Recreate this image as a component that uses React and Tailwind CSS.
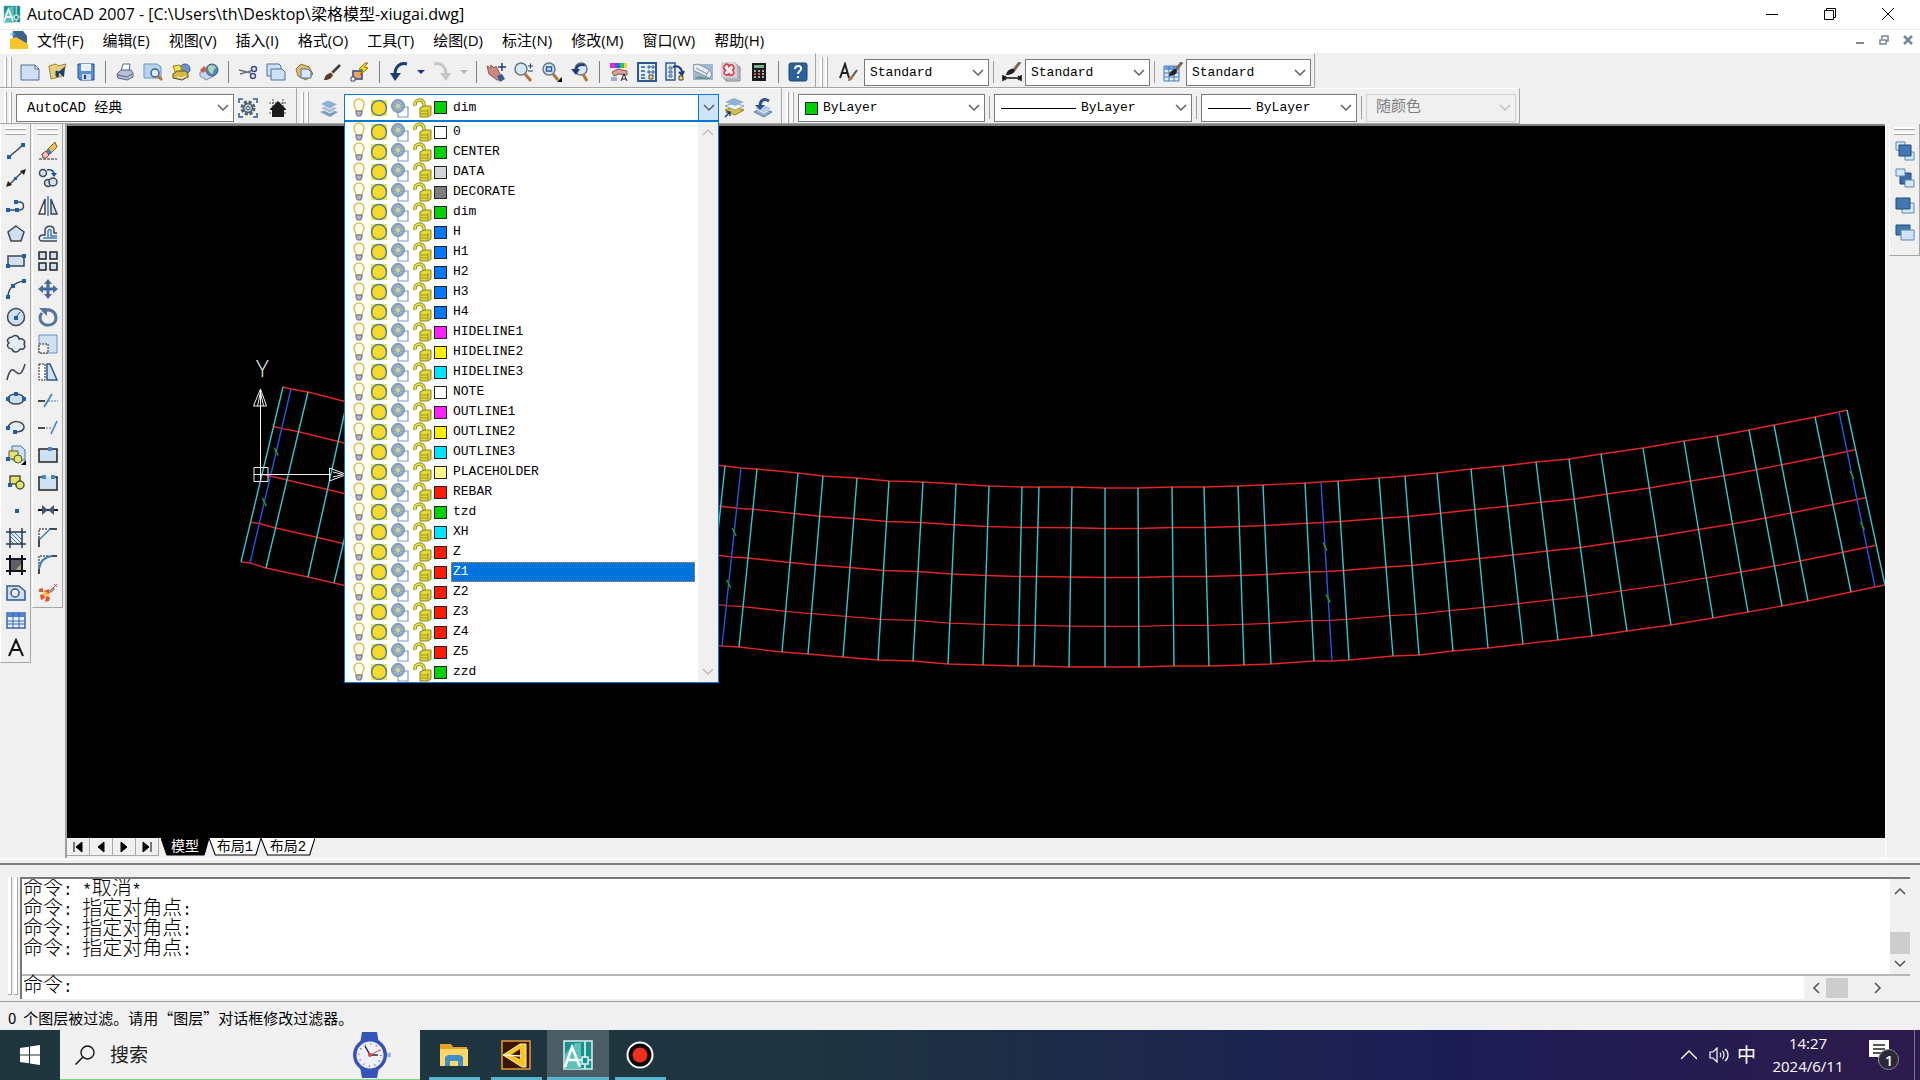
import { useState } from 'react';

const MENUS = ['文件(F)', '编辑(E)', '视图(V)', '插入(I)', '格式(O)', '工具(T)', '绘图(D)', '标注(N)', '修改(M)', '窗口(W)', '帮助(H)'];

const GREEN = '#00d200';
const BLUE = '#0078ff';
const RED = '#ff1a00';
const CYAN = '#00e5ff';

const LAYERS = [
  { name: '0', color: '#ffffff' },
  { name: 'CENTER', color: GREEN },
  { name: 'DATA', color: '#d2d5d8' },
  { name: 'DECORATE', color: '#7d7d82' },
  { name: 'dim', color: GREEN },
  { name: 'H', color: BLUE },
  { name: 'H1', color: BLUE },
  { name: 'H2', color: BLUE },
  { name: 'H3', color: BLUE },
  { name: 'H4', color: BLUE },
  { name: 'HIDELINE1', color: '#ff20ff' },
  { name: 'HIDELINE2', color: '#fff000' },
  { name: 'HIDELINE3', color: CYAN },
  { name: 'NOTE', color: '#ffffff' },
  { name: 'OUTLINE1', color: '#ff20ff' },
  { name: 'OUTLINE2', color: '#fff000' },
  { name: 'OUTLINE3', color: CYAN },
  { name: 'PLACEHOLDER', color: '#fff88a' },
  { name: 'REBAR', color: RED },
  { name: 'tzd', color: GREEN },
  { name: 'XH', color: CYAN },
  { name: 'Z', color: RED },
  { name: 'Z1', color: RED },
  { name: 'Z2', color: RED },
  { name: 'Z3', color: RED },
  { name: 'Z4', color: RED },
  { name: 'Z5', color: RED },
  { name: 'zzd', color: GREEN },
];

// cross beams of the deck: x/y at the upper edge, x/y at the lower edge
const BEAMS = [
  [283, 387, 241, 562],
  [291, 389, 250, 563, 'pier'],
  [308, 392, 266, 568],
  [347, 402, 308, 577],
  [375, 409, 334, 583],
  [440, 424, 405, 600],
  [540, 441, 512, 619],
  [640, 456, 618, 634],
  [725, 466, 706, 644],
  [741, 468, 722, 646, 'pier'],
  [757, 469, 739, 647],
  [798, 473, 782, 652],
  [823, 476, 808, 654],
  [857, 478, 843, 657],
  [889, 481, 878, 660],
  [923, 482, 913, 661],
  [956, 484, 948, 664],
  [989, 486, 983, 665],
  [1022, 487, 1018, 666],
  [1039, 487, 1034, 666],
  [1072, 487, 1069, 667],
  [1105, 488, 1105, 667],
  [1138, 488, 1139, 667],
  [1172, 487, 1174, 666],
  [1204, 487, 1209, 666],
  [1238, 486, 1244, 665],
  [1263, 485, 1271, 664],
  [1305, 483, 1314, 661],
  [1321, 482, 1332, 661, 'pier'],
  [1338, 481, 1349, 660],
  [1379, 478, 1393, 656],
  [1405, 476, 1419, 655],
  [1437, 473, 1453, 651],
  [1471, 469, 1488, 648],
  [1503, 466, 1523, 644],
  [1536, 462, 1558, 640],
  [1569, 459, 1592, 636],
  [1601, 454, 1627, 631],
  [1643, 448, 1671, 625],
  [1684, 441, 1713, 618],
  [1717, 436, 1748, 612],
  [1749, 430, 1782, 606],
  [1774, 425, 1808, 601],
  [1815, 417, 1851, 592],
  [1839, 412, 1875, 587, 'pier'],
  [1847, 410, 1885, 585],
];
const GIRDERS = [0, 0.226, 0.5, 0.773, 1];

const at = ([x1, y1, x2, y2], t) => [x1 + (x2 - x1) * t, y1 + (y2 - y1) * t];

const N = '#1f3f6e';
const S = '#3d4652';
const F = '#cfe0f2';

const ICONS = {
  new: <path d="M1 3h14l4 4v11H1zM15 3v4h4" fill={F} stroke="#4a6f9c" />,
  open: (
    <>
      <path d="M1 4l7-2 2 2 8-2-4 12-11 3z" fill="#e8cf7a" stroke="#9a8238" />
      <path d="M17 5l-6 5 5 5M11 10l-3-1v5l2 1z" fill={N} stroke={N} />
    </>
  ),
  save: (
    <>
      <path d="M2 2h16v16H4l-2-2z" fill="#5e8fd0" stroke="#2a4f87" />
      <path d="M5 2h10v7H5z" fill="#e6f0fb" />
      <path d="M6 12h9v6H6z" fill="#c3d6ee" />
      <path d="M8 13h2v4H8z" fill={N} />
    </>
  ),
  plot: (
    <>
      <path d="M6 9l2-7h7l-1 7z" fill="#fff" stroke="#5b6688" />
      <path d="M2 12l4-4h10l2 3v4l-6 3-9-2z" fill="#b9bfd4" stroke="#555e85" />
      <path d="M3 13l9 2 5-3" fill="none" stroke="#555e85" />
    </>
  ),
  preview: (
    <>
      <path d="M1 2h13l4 3v11H1z" fill="#b5d3f0" stroke="#6f94ba" />
      <circle cx="12" cy="11" r="4" fill="#dcecfb" stroke="#3d5f8c" strokeWidth="1.5" />
      <path d="M15 14l4 4" stroke="#b5723a" strokeWidth="2.5" />
    </>
  ),
  publish: (
    <>
      <circle cx="14" cy="7" r="5" fill="#6d95c8" stroke="#3a5e92" />
      <path d="M2 4l7-1 2 5-6 4z" fill="#ffe04a" stroke="#9a7a10" />
      <path d="M2 12l4-3h9l2 3v3l-6 3-9-2z" fill="#d9b84a" stroke="#5c5223" />
      <path d="M6 15l5 1 4-2" stroke="#fff" fill="none" />
    </>
  ),
  web: (
    <>
      <path d="M1 10l9-2 5 6-8 4-6-4z" fill="#c8d4e8" stroke="#7c8dab" />
      <circle cx="13" cy="8" r="6" fill="#4f86c0" stroke="#355f8c" />
      <path d="M9 5c3-3 7-2 8 1-2 1-3 3-3 6-3 0-5-3-5-7z" fill="#a9d8b0" />
      <path d="M1 8l4-4 3 3-4 4z" fill="#d75a44" />
    </>
  ),
  cut: (
    <>
      <path d="M1 8l12 3M2 12l11-3" stroke="#6c7480" strokeWidth="1.5" />
      <circle cx="16" cy="7" r="2.5" fill="none" stroke="#3d4a86" strokeWidth="1.5" />
      <circle cx="15" cy="14" r="2.5" fill="none" stroke="#3d4a86" strokeWidth="1.5" />
    </>
  ),
  copy: (
    <>
      <path d="M1 2h12l2 2v10H1z" fill={F} stroke="#4a6f9c" />
      <path d="M5 7h11l3 3v8H5z" fill={F} stroke="#4a6f9c" />
    </>
  ),
  paste: (
    <>
      <path d="M7 2l8 3 4 7-7 6-8-4-2-7z" fill="#dcbf72" stroke="#8c7034" />
      <path d="M7 7h7l3 3v6H7z" fill="#d9e9f9" stroke="#4a6f9c" />
    </>
  ),
  brush: (
    <>
      <path d="M18 3l-8 8" stroke="#3c3c3c" strokeWidth="2.5" />
      <path d="M2 18c1-5 4-7 7-7l2 2c-1 3-4 5-9 5z" fill="#5b3d2c" />
      <path d="M9 10l2 2" stroke="#d5a56a" strokeWidth="2" />
    </>
  ),
  bedit: (
    <>
      <path d="M3 9h9v8H3z" fill="#f2a36b" stroke="#2c4b7c" strokeWidth="1.5" />
      <path d="M15 1l-6 6 4 1-3 5 8-7-4-1 4-4z" fill="#ffd91f" stroke="#937000" />
      <path d="M1 15h4v4H1z" fill="#fff" stroke="#2c4b7c" />
    </>
  ),
  undo: (
    <>
      <path d="M18 2C11 0 6 5 6 12" fill="none" stroke="#1d3c73" strokeWidth="3" />
      <path d="M1 11h11l-6 8z" fill="#1d3c73" />
    </>
  ),
  redo: (
    <>
      <path d="M2 2c7-2 12 3 12 10" fill="none" stroke="#c3c6ca" strokeWidth="3" />
      <path d="M8 11h11l-5 8z" fill="#c3c6ca" />
    </>
  ),
  pan: (
    <>
      <path d="M1 4l3 2 1-3 3 3 2-2 4 8v6h-3L3 12z" fill="#c98a84" stroke="#8e5550" />
      <path d="M11 14l5-2 3 5-5 3z" fill="#38598c" />
      <path d="M16 1v8M12 5h8" stroke={N} strokeWidth="1.5" />
    </>
  ),
  zoomrt: (
    <>
      <circle cx="7" cy="7" r="6" fill="#d6e6f5" stroke="#64788e" strokeWidth="1.5" />
      <path d="M11 12l6 7" stroke="#b5723a" strokeWidth="3" />
      <path d="M14 4h5M16.5 1.5v5M14 9h5" stroke={N} />
    </>
  ),
  zoomwin: (
    <>
      <circle cx="7" cy="7" r="6" fill="#d6e6f5" stroke="#64788e" strokeWidth="1.5" />
      <path d="M4.5 5h5v4h-5z" fill="none" stroke="#1f5fa8" strokeWidth="1.5" />
      <path d="M11 12l5 6" stroke="#b5723a" strokeWidth="3" />
      <path d="M20 15v5h-5z" fill="#000" />
    </>
  ),
  zoomprev: (
    <>
      <circle cx="11" cy="7" r="6" fill="#d6e6f5" stroke="#64788e" strokeWidth="1.5" />
      <path d="M13 12l4 7" stroke="#b5723a" strokeWidth="3" />
      <path d="M15 3C9 2 6 4 6 9" stroke="#1d3c73" strokeWidth="2.5" fill="none" />
      <path d="M1 7h9l-4 6z" fill="#1d3c73" />
    </>
  ),
  props: (
    <>
      <path d="M1 1h5v5H1z" fill="#e02bd0" />
      <path d="M6 1h5v5H6z" fill="#3b5bea" />
      <path d="M11 1h4v5h-4z" fill="#22c55a" />
      <path d="M15 1h3v5h-3z" fill="#f4d02b" />
      <path d="M3 10l6-3 9 2v4l-8-1-5 2z" fill="#d79f98" stroke="#8e5550" />
      <path d="M2 16h6M2 18h6" stroke="#4a6fb0" />
      <path d="M12 19l3-7 3 7M13 17h4" stroke="#222" fill="none" />
    </>
  ),
  dc: (
    <>
      <path d="M1 1h18v18H1z" fill="#e5effa" stroke="#2f578e" strokeWidth="2" />
      <path d="M4 5h4M4 9h4M4 13h4M4 16h4" stroke="#2f578e" strokeWidth="1.5" />
      <path d="M11 4h2v2h-2zM15 4h2v2h-2zM11 9h2v2h-2zM15 9h2v2h-2z" fill="#e5effa" stroke="#2f578e" />
      <path d="M12 13h4v4h-4z" fill="#e9e06a" stroke="#444" />
    </>
  ),
  palettes: (
    <>
      <path d="M1 1h9v17H1z" fill="#e5effa" stroke="#2f578e" strokeWidth="1.5" />
      <path d="M4 5h3v2H4zM4 9h3v2H4zM4 13h3v2H4z" fill="#fff" stroke="#2f578e" />
      <path d="M8 5c5-2 9 1 9 6M14 10l3 3 2-4" fill="none" stroke="#1d3c73" strokeWidth="2" />
      <path d="M14 14h4v4h-4z" fill="#e9e06a" stroke="#444" />
    </>
  ),
  sheets: (
    <>
      <path d="M0 2h20v16H0z" fill="#9db9cf" />
      <path d="M0 3l5-1 12 6 2 5-3 3-10-5-5-2z" fill="#e6edf2" stroke="#8293a2" />
      <path d="M3 6l11 6M16 8l-3 6" stroke="#8293a2" />
      <path d="M1 17l5-3 13 3z" fill="#6f9188" />
    </>
  ),
  markup: (
    <>
      <path d="M5 5h14v14H5z" fill="#c9ccd2" stroke="#7b8088" />
      <path d="M3 3h14v14H3z" fill="#dfe2e7" stroke="#8d929a" />
      <path d="M1 1h14v14H1z" fill="#eef0f4" stroke="#b6bac2" />
      <path d="M4 3c2-2 4 0 4 1 2-2 5-1 5 2 0 2-2 2-2 2 3 1 2 5 0 5-2 1-3-1-3-1-2 2-5 1-5-1 0-2 2-3 2-3-3 0-3-4-1-5z" fill="none" stroke="#e2404a" strokeWidth="1.8" />
    </>
  ),
  calc: (
    <>
      <path d="M3 1h14v18H3z" fill="#1c1c1c" />
      <path d="M5 3h10v3H5z" fill="#7fb08c" />
      <path d="M5 9h10M5 12h10M5 15h10" stroke="#d9d9d9" strokeWidth="1.5" strokeDasharray="2 2" />
      <path d="M5 12h6" stroke="#e33" strokeWidth="1.5" strokeDasharray="2 2" />
    </>
  ),
  help: (
    <>
      <rect x="1" y="1" width="18" height="18" rx="2" fill="#2a6299" stroke="#1b4674" />
      <path d="M7 7c0-4 7-4 6 0 0 2-3 2-3 5M10 14v2" fill="none" stroke="#fff" strokeWidth="2" />
    </>
  ),
  textstyle: (
    <>
      <path d="M2 16L7 2l4 14M4 11h6" fill="none" stroke="#222" strokeWidth="2" />
      <path d="M19 8l-5 7" stroke="#555" strokeWidth="2" />
      <path d="M10 19c0-3 2-5 4-5l1 1c0 2-2 4-5 4z" fill="#a8743d" />
    </>
  ),
  dimstyle: (
    <>
      <path d="M1 13v6M19 13v6M1 16h18M4 14l-3 2 3 2M16 14l3 2-3 2" stroke="#111" strokeWidth="1.5" fill="none" />
      <path d="M18 0l-6 8" stroke="#7d6a55" strokeWidth="3" />
      <path d="M4 13c1-5 5-7 8-6l1 2c-1 2-4 4-9 4z" fill="#222" />
    </>
  ),
  tablestyle: (
    <>
      <path d="M1 4h15v15H1z" fill="#dceafa" stroke="#4876ba" />
      <path d="M1 4h15v4H1z" fill="#6f9fe0" />
      <path d="M6 4v15M11 4v15M1 11h15M1 15h15" stroke="#4876ba" />
      <path d="M19 0l-6 8" stroke="#7d6a55" strokeWidth="3" />
      <path d="M6 14c0-4 4-7 7-7l1 2c0 2-2 5-8 5z" fill="#222" />
    </>
  ),
  gear: (
    <>
      <path d="M1 5V1h4M15 1h4v4M19 15v4h-4M5 19H1v-4" fill="none" stroke="#5b7fae" strokeWidth="2" />
      <circle cx="10" cy="10" r="6" fill="none" stroke="#53606e" strokeWidth="3" strokeDasharray="3 1.7" />
      <circle cx="10" cy="10" r="4.5" fill="#a9bed6" stroke="#53606e" strokeWidth="1.5" />
      <circle cx="10" cy="10" r="1.5" fill="#fff" stroke="#53606e" />
    </>
  ),
  home: (
    <>
      <path d="M1 5h18M1 15h18M5 1v18M15 1v18" stroke="#555" strokeDasharray="2 1" />
      <path d="M2 11l8-8 8 8v1h-2v7H4v-7H2z" fill="#1b1b1b" />
    </>
  ),
  layers: (
    <>
      <path d="M1 14l8-3 10 3-8 5z" fill="#7d9cc4" />
      <path d="M1 10l8-3 10 3-8 5z" fill="#a5bddb" stroke="#f0f0f0" />
      <path d="M1 6l8-4 10 4-8 5z" fill="#8fb0d4" stroke="#f0f0f0" />
    </>
  ),
  layercur: (
    <>
      <path d="M1 12l9-3 10 3-9 5z" fill="#d8c23c" stroke="#8f7f1c" />
      <path d="M1 8l9-3 10 3-9 4z" fill="#f2f6fa" stroke="#8aa3be" />
      <path d="M1 4l9-4 10 4-9 4z" fill="#8fb0d4" />
      <path d="M1 19l4-4M2 14h4v4" stroke="#1d3c73" strokeWidth="1.5" fill="none" />
    </>
  ),
  layerprev: (
    <>
      <path d="M1 14l8-4 10 4-8 5z" fill="#8fadd2" stroke="#5f7ea8" />
      <path d="M1 10l8-4 10 4-8 5z" fill="#b5cae2" stroke="#f0f0f0" />
      <path d="M16 3c-5-3-9-1-9 5" stroke="#2e5182" strokeWidth="3" fill="none" />
      <path d="M2 7h10l-5 5z" fill="#2e5182" />
    </>
  ),
  line: (
    <>
      <path d="M3 16L17 4" stroke={S} strokeWidth="1.5" />
      <path d="M1 14h4v4H1zM15 2h4v4h-4z" fill="#1f5fa8" />
    </>
  ),
  xline: (
    <>
      <path d="M3 17L17 3" stroke={S} strokeWidth="1.5" />
      <path d="M0 19l2-6 4 4zM20 1l-6 2 4 4z" fill="#222" />
      <path d="M8 9h3v3H8z" fill="#1f5fa8" />
    </>
  ),
  pline: (
    <>
      <path d="M2 14h11M10 6h3c6 0 6 8 0 8" fill="none" stroke={S} strokeWidth="1.5" />
      <path d="M0 12h4v4H0zM9 12h4v4H9zM8 4h4v4H8z" fill="#1f5fa8" />
    </>
  ),
  polygon: <path d="M10 2l8 6-3 9H5L2 8z" fill={F} stroke={S} strokeWidth="1.5" />,
  rect: (
    <>
      <path d="M2 5h16v10H2z" fill={F} stroke={S} strokeWidth="1.5" />
      <path d="M0 13h4v4H0zM16 3h4v4h-4z" fill="#1f5fa8" />
    </>
  ),
  arc: (
    <>
      <path d="M2 18C2 9 9 3 18 2" fill="none" stroke={S} strokeWidth="1.5" />
      <path d="M0 16h4v4H0zM16 0h4v4h-4zM5 5h4v4H5z" fill="#1f5fa8" />
    </>
  ),
  circle: (
    <>
      <circle cx="10" cy="10" r="8.5" fill={F} stroke={S} strokeWidth="1.5" />
      <path d="M10 10l4-5" stroke={S} />
      <path d="M8 9h4v4H8z" fill="#1f5fa8" />
    </>
  ),
  cloud: <path d="M6 3c3-3 7-1 7 2 4-1 7 2 5 5 2 3 0 6-4 5-2 4-7 4-8 0-4 0-6-4-3-6C0 7 2 3 6 3z" fill="#e3ebf4" stroke={S} strokeWidth="1.5" />,
  spline: <path d="M1 18c3-13 6-11 9-8s6 3 9-8" fill="none" stroke={S} strokeWidth="1.5" />,
  ellipse: (
    <>
      <ellipse cx="10" cy="10" rx="8" ry="5" fill={F} stroke={S} strokeWidth="1.5" />
      <path d="M0 8h4v4H0zM16 8h4v4h-4zM8 3h4v4H8z" fill="#1f5fa8" />
    </>
  ),
  earc: (
    <>
      <path d="M2 11c1-9 17-8 16 0-1 4-6 4-9 4" fill="#e3ebf4" stroke={S} strokeWidth="1.5" />
      <path d="M0 9h4v4H0zM7 13h4v4H7z" fill="#1f5fa8" />
    </>
  ),
  insert: (
    <>
      <path d="M6 1h9l4 4v10H6z" fill={F} stroke="#4a6f9c" />
      <path d="M3 6h9v8H3z" fill="#e6e272" stroke="#4d5638" />
      <circle cx="12" cy="14" r="4" fill="#e6e272" stroke="#4d5638" />
      <path d="M0 12h4v4H0z" fill="#1f5fa8" />
      <path d="M20 15v5h-5z" fill="#000" />
    </>
  ),
  block: (
    <>
      <path d="M4 4h10v8H4z" fill="#e6e272" stroke="#4d5638" strokeWidth="1.5" />
      <circle cx="14" cy="13" r="4" fill="#e6e272" stroke="#4d5638" strokeWidth="1.5" />
      <path d="M2 11h4v4H2z" fill="#1f5fa8" />
    </>
  ),
  point: <path d="M9 9h4v4H9z" fill="#1f5fa8" />,
  hatch: (
    <>
      <path d="M4 4h12v12H4z" fill="#e6f0fb" />
      <path d="M4 8l8 8M4 4l12 12M8 4l8 8M4 12l4 4" stroke="#4a6f9c" />
      <path d="M4 0v20M16 0v20M0 4h20M0 16h20" stroke="#22385a" strokeWidth="1.5" />
    </>
  ),
  gradient: (
    <>
      <path d="M4 4h12v12H4z" fill="#5d6068" />
      <path d="M9 16l7-8v8z" fill="#b5a768" />
      <path d="M4 0v20M16 0v20M0 4h20M0 16h20" stroke="#10131c" strokeWidth="2" />
    </>
  ),
  region: (
    <>
      <path d="M1 3h12l6 5v9H1z" fill={F} stroke="#2f578e" strokeWidth="1.5" />
      <circle cx="9" cy="10" r="4" fill="#f0f0f0" stroke="#2f578e" strokeWidth="1.5" />
    </>
  ),
  table: (
    <>
      <path d="M1 3h18v15H1z" fill="#e8f1fc" stroke="#3a62b4" strokeWidth="1.5" />
      <path d="M1 3h18v4H1z" fill="#5480d4" />
      <path d="M7 3v15M13 3v15M1 11h18M1 14h18" stroke="#3a62b4" />
    </>
  ),
  mtext: <path d="M3 18L10 2l7 16M6 12h8" fill="none" stroke="#111" strokeWidth="2" />,
  erase: (
    <>
      <path d="M1 18h18" stroke="#222" strokeDasharray="3 1" />
      <path d="M9 9l8-8 2 5-7 7z" fill="#e4c25a" stroke="#7c5d22" />
      <path d="M8 10l3-2 3 4-3 2z" fill="#4f79b0" />
      <path d="M4 13l4-3 3 4-3 3H5z" fill="#e9c4bb" stroke="#8c3c30" />
    </>
  ),
  copyobj: (
    <>
      <circle cx="5" cy="5" r="3.5" fill={F} stroke={S} strokeWidth="1.5" />
      <circle cx="10" cy="15" r="3.5" fill={F} stroke={S} strokeWidth="1.5" />
      <circle cx="15" cy="14" r="4" fill={F} stroke={S} strokeWidth="1.5" />
      <path d="M9 2c4-1 7 1 7 4" stroke="#1f4f8e" strokeWidth="1.5" />
      <path d="M13 5h6l-3 4z" fill="#1f4f8e" />
    </>
  ),
  mirror: (
    <>
      <path d="M7 3v15H1z" fill="#fff" stroke={S} strokeWidth="1.5" />
      <path d="M13 3v15h6z" fill={F} stroke={S} strokeWidth="1.5" />
      <path d="M10 0v20" stroke="#3b7cc4" strokeWidth="1.5" />
    </>
  ),
  offset: (
    <>
      <path d="M19 17H3c-3-2-2-6 2-6h2V6c1-5 9-5 9 0v3h3" fill="none" stroke={S} strokeWidth="1.5" />
      <path d="M19 14H5M10 13V7c1-2 3-2 3 0v5h6" fill="none" stroke="#3b7cc4" strokeWidth="1.5" />
    </>
  ),
  array: <path d="M1 1h7v7H1zM12 1h7v7h-7zM1 12h7v7H1zM12 12h7v7h-7z" fill={F} stroke="#222" strokeWidth="1.5" />,
  move: (
    <>
      <path d="M10 3v14M3 10h14" stroke="#44699c" strokeWidth="3" />
      <path d="M10 0l4 5H6zM10 20l4-5H6zM0 10l5-4v8zM20 10l-5-4v8z" fill="#44699c" />
    </>
  ),
  rotate: (
    <>
      <path d="M5 5c6-5 13 0 13 6 0 9-15 10-16 0 0-2 1-4 2-5" fill="none" stroke="#54749e" strokeWidth="3" />
      <path d="M1 1h8v8z" fill="#54749e" />
    </>
  ),
  scale: (
    <>
      <path d="M1 1h18v18H1z" fill={F} stroke="#6a92c4" />
      <path d="M1 10h9v9H1z" fill="#f0f0f0" stroke="#222" strokeDasharray="2 1" />
    </>
  ),
  stretch: (
    <>
      <path d="M1 2h6v16H1z" fill="#fff" stroke="#222" strokeDasharray="2 1" />
      <path d="M9 2l3 0 7 16H9z" fill={F} stroke="#2f578e" strokeWidth="1.5" />
    </>
  ),
  trim: (
    <>
      <path d="M0 11h7" stroke="#111" strokeWidth="1.5" />
      <path d="M10 11h10" stroke="#3b7cc4" strokeDasharray="2 1" />
      <path d="M6 17l8-13" stroke="#3b7cc4" strokeWidth="1.5" />
    </>
  ),
  extend: (
    <>
      <path d="M0 11h7" stroke="#111" strokeWidth="1.5" />
      <path d="M8 11h6" stroke="#3b7cc4" strokeDasharray="2 1" />
      <path d="M13 17l6-13" stroke="#3b7cc4" strokeWidth="1.5" />
    </>
  ),
  breakpt: (
    <>
      <path d="M1 4h18v13H1z" fill={F} stroke="#222" strokeWidth="1.5" />
      <path d="M10 2h4v4h-4z" fill="#4a86c8" />
    </>
  ),
  break: (
    <>
      <path d="M5 4H1v13h18V4h-4" fill={F} stroke="#222" strokeWidth="1.5" />
      <path d="M4 2h4v4H4zM13 2h4v4h-4z" fill="#4a86c8" />
    </>
  ),
  join: (
    <>
      <path d="M0 10h20" stroke="#111" strokeWidth="2" />
      <path d="M4 5l6 5-6 5zM16 5l-6 5 6 5z" fill="#44597a" />
    </>
  ),
  chamfer: (
    <>
      <path d="M1 19v-9M11 1h8" stroke="#111" strokeWidth="1.5" />
      <path d="M1 10V1h9" stroke="#111" strokeDasharray="2 1" fill="none" />
      <path d="M1 12L12 1" stroke="#3b7cc4" strokeWidth="1.5" />
    </>
  ),
  fillet: (
    <>
      <path d="M1 19v-5M14 1h5" stroke="#111" strokeWidth="1.5" />
      <path d="M1 12V1h9" stroke="#111" strokeDasharray="2 1" fill="none" />
      <path d="M1 14C2 6 7 2 14 1" stroke="#3b7cc4" strokeWidth="2" fill="none" />
    </>
  ),
  explode: (
    <>
      <path d="M1 6l4-1v4H1zM6 8l5-2 1 4-4 2zM2 12l4-1 1 4-4 2zM8 13l4 1-1 4-4 1z" fill="#e4532c" />
      <path d="M5 9l3 1-2 3M9 11l2 2" stroke="#ffc83a" strokeWidth="2" />
      <path d="M11 8l4-4 2 2-4 4z" fill="#8d8f96" />
      <path d="M16 1l3 3M19 1l-4 4" stroke="#d84a30" />
    </>
  ),
  ordfront: (
    <>
      <path d="M1 1h9v8H1zM10 11h9v8h-9z" fill="#d6e8f6" stroke="#5b86b0" />
      <path d="M4 4h12v11H4z" fill="#4577b0" stroke="#234a7c" />
    </>
  ),
  ordback: (
    <>
      <path d="M5 5h11v11H5z" fill="#3d6da6" stroke="#234a7c" />
      <path d="M1 1h9v7H1zM10 12h9v7h-9z" fill="#d6e8f6" stroke="#5b86b0" />
    </>
  ),
  ordabove: (
    <>
      <path d="M7 7h12v10H7z" fill="#d6e8f6" stroke="#5b86b0" />
      <path d="M1 2h14v11H1z" fill="#4577b0" stroke="#234a7c" />
    </>
  ),
  ordunder: (
    <>
      <path d="M1 2h14v10H1z" fill="#4577b0" stroke="#234a7c" />
      <path d="M6 7h13v10H6z" fill="#cfe3f4" stroke="#5b86b0" />
    </>
  ),
};

const STANDARD = [
  [['new', '新建'], ['open', '打开'], ['save', '保存']],
  [['plot', '打印'], ['preview', '打印预览'], ['publish', '发布'], ['web', '网上发布']],
  [['cut', '剪切'], ['copy', '复制'], ['paste', '粘贴'], ['brush', '特性匹配'], ['bedit', '块编辑器']],
  [['undo', '放弃'], ['redo', '重做']],
  [['pan', '实时平移'], ['zoomrt', '实时缩放'], ['zoomwin', '窗口缩放'], ['zoomprev', '缩放上一个']],
  [['props', '特性'], ['dc', '设计中心'], ['palettes', '工具选项板'], ['sheets', '图纸集'], ['markup', '标记集'], ['calc', '快速计算器']],
  [['help', '帮助']],
];

const DRAW = [
  ['line', '直线'], ['xline', '构造线'], ['pline', '多段线'], ['polygon', '正多边形'], ['rect', '矩形'], ['arc', '圆弧'], ['circle', '圆'],
  ['cloud', '修订云线'], ['spline', '样条曲线'], ['ellipse', '椭圆'], ['earc', '椭圆弧'], ['insert', '插入块'], ['block', '创建块'],
  ['point', '点'], ['hatch', '图案填充'], ['gradient', '渐变色'], ['region', '面域'], ['table', '表格'], ['mtext', '多行文字'],
];

const MODIFY = [
  ['erase', '删除'], ['copyobj', '复制对象'], ['mirror', '镜像'], ['offset', '偏移'], ['array', '阵列'], ['move', '移动'], ['rotate', '旋转'],
  ['scale', '缩放'], ['stretch', '拉伸'], ['trim', '修剪'], ['extend', '延伸'], ['breakpt', '打断于点'], ['break', '打断'],
  ['join', '合并'], ['chamfer', '倒角'], ['fillet', '圆角'], ['explode', '分解'],
];

const ORDER = [['ordfront', '前置'], ['ordback', '后置'], ['ordabove', '置于对象之上'], ['ordunder', '置于对象之下']];

function Icon({ name }) {
  return (
    <svg viewBox="0 0 20 20" className="size-5 shrink-0" fill="none" aria-hidden="true">
      {ICONS[name]}
    </svg>
  );
}

function ToolButton({ name, label, className = 'w-7' }) {
  return (
    <button type="button" aria-label={label} className={`flex shrink-0 items-center justify-center ${className}`}>
      <Icon name={name} />
    </button>
  );
}

function Chevron({ className = 'text-[#606060]', d = 'M1 3l5 5 5-5' }) {
  return (
    <svg viewBox="0 0 12 12" className={`size-3 ${className}`} fill="none" stroke="currentColor" strokeWidth="1.5" aria-hidden="true">
      <path d={d} />
    </svg>
  );
}

function HBar({ children }) {
  return (
    <div className="flex items-stretch border-t border-r border-b border-[#a5a5a5] border-t-white pt-[3px]">
      <div className="mr-1 ml-1 flex gap-[2px]">
        <i className="w-[3px] border-r border-[#a8a8a8] bg-white" />
        <i className="w-[3px] border-r border-[#a8a8a8] bg-white" />
      </div>
      {children}
    </div>
  );
}

function VBar({ items, className }) {
  return (
    <div className="flex w-[31px] flex-col border-r border-b border-l border-[#a5a5a5] border-l-white">
      <div className="mx-1 mt-[3px] mb-[2px] flex flex-col gap-[2px]">
        <i className="h-[3px] border-b border-[#a8a8a8] bg-white" />
        <i className="h-[3px] border-b border-[#a8a8a8] bg-white" />
      </div>
      <div className={`flex flex-col ${className}`}>
        {items.map(([name, label]) => (
          <ToolButton key={name} name={name} label={label} className="w-full flex-1" />
        ))}
      </div>
    </div>
  );
}

const Sep = () => (
  <div className="flex w-[11px] shrink-0 justify-center py-1">
    <i className="w-px bg-[#808080]" />
  </div>
);

const ThinSep = () => <i className="mx-1 my-1 w-px shrink-0 bg-[#a0a0a0]" />;

function Combo({ label, value, className, pad = 'pl-[5px]', disabled, children }) {
  return (
    <div className={`relative mt-[2px] mb-px flex shrink-0 items-center border ${disabled ? 'border-[#d0d0d0] bg-[#f0f0f0]' : 'border-[#7a7a7a] bg-white'} ${className}`}>
      <select
        aria-label={label}
        disabled={disabled}
        className={`h-full w-full appearance-none bg-transparent ${pad} ${disabled ? 'text-[#808080]' : 'text-black'}`}
      >
        <option>{value}</option>
      </select>
      {children}
      <span className="pointer-events-none absolute right-1">
        <Chevron className={disabled ? 'text-[#c0c0c0]' : 'text-[#606060]'} />
      </span>
    </div>
  );
}

function LayerState({ color }) {
  return (
    <>
      <svg viewBox="0 0 88 20" className="h-5 w-[88px] shrink-0" fill="none" aria-hidden="true">
        <path d="M11 13c0-3-2-4-2-7a5 5 0 0 1 10 0c0 3-2 4-2 7z" fill="#fffdf0" stroke="#e2bd4e" strokeWidth="1.5" />
        <path d="M11 13h6v3h-1v2h-4v-2h-1z" fill="#b4b7c6" stroke="#6c6f85" />
        <path d="M26 2h16v16H26z" fill="#f2e25a" />
        <circle cx="34" cy="10" r="7.5" fill="#f6d92b" stroke="#4c8580" strokeWidth="1.5" />
        <path d="M55 9h8v10H53v-4" fill="#fff" stroke="#7d9cc6" strokeWidth="1.2" />
        <circle cx="53" cy="8" r="6.5" fill="#8ba6b8" stroke="#7591ad" />
        <path d="M53 3v10M48 8h10M49.5 4.5l7 7M56.5 4.5l-7 7" stroke="#b9c9c4" />
        <circle cx="53" cy="8" r="2" fill="#cfd4a0" />
        <path d="M70 8c-1-7 8-8 9-2v6" stroke="#8f8c1a" strokeWidth="3.5" />
        <path d="M70 8c-1-7 8-8 9-2v6" stroke="#e8e04c" strokeWidth="1.8" />
        <path d="M75 10l4-2 7 0v9l-3 2h-8z" fill="#e2d83a" stroke="#85821a" />
        <path d="M76 13h7M76 16h7M83 11v7" stroke="#9e981f" />
      </svg>
      <i className="ml-px size-[13px] shrink-0 border border-[#222]" style={{ background: color }} />
    </>
  );
}

function LayerCombo() {
  const [open, setOpen] = useState(true);
  const [current, setCurrent] = useState('dim');
  const [hover, setHover] = useState('Z1');
  const layer = LAYERS.find((l) => l.name === current);

  return (
    <div className="relative mt-[2px] mb-[2px] flex w-[375px] shrink-0">
      <button
        type="button"
        role="combobox"
        aria-label="图层"
        aria-expanded={open}
        aria-controls="layer-list"
        className="flex flex-1 items-center border border-[#0078d7] bg-white text-left"
        onClick={() => setOpen(!open)}
      >
        <LayerState color={layer.color} />
        <span className="ml-[6px] flex-1">{current}</span>
        <span className="flex w-5 items-center justify-center self-stretch border-l border-[#0078d7] bg-[#cce4f7]">
          <Chevron />
        </span>
      </button>
      {open && (
        <div className="absolute top-full left-0 z-10 flex w-full border border-[#0078d7] bg-white">
          <ul id="layer-list" role="listbox" aria-label="图层" className="flex-1">
            {LAYERS.map((l) => (
              <li
                key={l.name}
                role="option"
                aria-selected={l.name === hover}
                className="flex h-5 items-center"
                onMouseEnter={() => setHover(l.name)}
                onClick={() => {
                  setCurrent(l.name);
                  setOpen(false);
                }}
              >
                <LayerState color={l.color} />
                <span
                  className={`mr-[3px] ml-1 h-5 flex-1 border border-dotted pl-px leading-[18px] ${
                    l.name === hover ? 'border-[#d98a3a] bg-[#0074dc] text-white' : 'border-transparent'
                  }`}
                >
                  {l.name}
                </span>
              </li>
            ))}
          </ul>
          <div className="flex w-5 flex-col items-center justify-between bg-[#f0f0f0] py-1">
            <Chevron className="text-[#bfbfbf]" d="M1 9l5-5 5 5" />
            <Chevron className="text-[#bfbfbf]" />
          </div>
        </div>
      )}
    </div>
  );
}

function Drawing() {
  return (
    <svg viewBox="67 126 1818 712" preserveAspectRatio="xMinYMin meet" className="block h-full w-full" fill="none" aria-label="梁格模型">
      {GIRDERS.map((t) => (
        <polyline key={t} points={BEAMS.map((b) => at(b, t).join(',')).join(' ')} stroke="#e0261e" strokeWidth="1.4" />
      ))}
      {BEAMS.map((b) => (
        <line key={b[0]} x1={b[0]} y1={b[1]} x2={b[2]} y2={b[3]} stroke={b[4] ? '#2458e4' : '#35c4d2'} strokeWidth="1.4" />
      ))}
      {BEAMS.filter((b) => b[4]).flatMap((b) =>
        [0.36, 0.65].map((t) => {
          const [x, y] = at(b, t);
          return <line key={`${b[0]}-${t}`} x1={x - 2} y1={y - 4} x2={x + 2} y2={y + 4} stroke="#1fa32a" strokeWidth="1.3" />;
        })
      )}
      <g stroke="#f2f2f2">
        <path d="M254 467.5h14v14h-14zM254 474.5h77M260.5 481V389" />
        <path d="M253.500 406l7-17 6 17zM257.500 406l3-14 3 14" />
        <path d="M329.5 468v13l17-6.5zM333 472l10 2.5-10 2.5" />
      </g>
      <text x="256" y="377" fill="#e8e8e8" className="font-['Open_Sans'] text-[24px] font-light">
        Y
      </text>
    </svg>
  );
}

function SheetTab({ label, active, width }) {
  return (
    <button type="button" className={`relative flex h-[18px] shrink-0 items-center justify-center ${width} ${active ? 'text-white' : 'text-black'}`}>
      <svg viewBox="0 0 50 18" preserveAspectRatio="none" className="absolute inset-0 size-full" aria-hidden="true">
        <path d="M0 0l6 17h39L50 0" fill={active ? '#000' : '#fff'} stroke="#000" />
      </svg>
      <span className="relative text-sm leading-[18px]">{label}</span>
    </button>
  );
}

function Logo({ className }) {
  return (
    <svg viewBox="0 0 30 30" className={className} fill="none" aria-hidden="true">
      <path d="M1 1h28v28H1z" fill="#1d8f8e" stroke="#d8f3f0" strokeWidth="1.5" />
      <path d="M2 14L12 3l6 0v26H2z" fill="#5fc0ba" />
      <path d="M2 27L9 7l8 20M5 20h9" stroke="#fff" strokeWidth="2.5" />
      <path d="M22 2v16M22 24v5M25 20h4M13 20h6M19 17h6v7h-6z" stroke="#e6fffc" strokeWidth="1.5" />
    </svg>
  );
}

const Half = ({ children }) => <span className="text-base leading-5">{children}</span>;

function CommandPanel() {
  const points = ['指定对角点', '指定对角点', '指定对角点'];
  return (
    <section className="shrink-0 border-t-2 border-white">
      <div className="mt-[3px] h-[2px] bg-[#808080]" />
      <div className="flex h-[134px] pt-3 pr-[10px] pl-2">
        <div className="mr-[2px] flex gap-[2px] pb-1">
          <i className="w-1 border-r border-b border-[#a8a8a8] bg-white" />
          <i className="w-1 border-r border-b border-[#a8a8a8] bg-white" />
        </div>
        <div className="flex min-w-0 flex-1 flex-col border-t-2 border-l-2 border-[#787878] font-['Liberation_Mono','Noto_Sans_CJK_SC',monospace] text-[20px] leading-5 font-light">
          <div className="flex h-[97px] border-b-2 border-[#b8b8b8] bg-white">
            <div className="flex-1 overflow-hidden pt-px pl-px">
              <p className="h-5 whitespace-pre">
                命令<Half>: *</Half>取消<Half>*</Half>
              </p>
              {points.map((l, i) => (
                <p key={i} className="h-5 whitespace-pre">
                  命令<Half>: </Half>
                  {l}
                  <Half>:</Half>
                </p>
              ))}
            </div>
            <div className="flex w-5 flex-col items-center bg-[#f0f0f0] pt-[6px] pb-1">
              <Chevron className="text-[#505050]" d="M1 9l5-5 5 5" />
              <i className="mt-auto mb-1 h-[22px] w-full bg-[#cdcdcd]" />
              <Chevron className="text-[#505050]" />
            </div>
          </div>
          <div className="flex flex-1">
            <label className="flex flex-1 items-center bg-white pl-px">
              <span>
                命令<Half>:</Half>
              </span>
              <input className="h-full min-w-0 flex-1 pl-2 text-base outline-none" />
            </label>
            <div className="mr-5 flex w-[86px] items-center">
              <span className="ml-[6px]">
                <Chevron className="text-[#505050]" d="M9 1L4 6l5 5" />
              </span>
              <i className="ml-1 h-5 w-[22px] bg-[#cdcdcd]" />
              <span className="mr-[6px] ml-auto">
                <Chevron className="text-[#505050]" d="M3 1l5 5-5 5" />
              </span>
            </div>
          </div>
        </div>
      </div>
      <div className="h-[2px]" />
    </section>
  );
}

function TaskButton({ label, active, children }) {
  return (
    <button type="button" aria-label={label} className={`flex w-[62px] flex-col items-center justify-between ${active ? 'bg-[#4a5d67]' : ''}`}>
      <span className="flex flex-1 items-center pt-[2px]">{children}</span>
      <i className={`h-[3px] bg-[#55b4cf] ${active ? 'w-full' : 'w-[51px]'}`} />
    </button>
  );
}

function Taskbar() {
  return (
    <footer className="flex h-[50px] shrink-0 bg-[linear-gradient(90deg,#20363f_0%,#1e343f_42%,#1c1d56_75%,#2d1b4c_100%)] font-['Open_Sans','Noto_Sans_CJK_SC',sans-serif] text-white">
      <button type="button" aria-label="开始" className="flex w-[60px] items-center justify-center">
        <svg viewBox="0 0 20 20" className="size-5" fill="#fff" aria-hidden="true">
          <path d="M0 3l9-1.3V9.500H0zM10 1.500L20 0v9.500H10zM0 10.500h9v7.800L0 17zM10 10.500h10V20l-10-1.500z" />
        </svg>
      </button>
      <label className="flex w-[360px] items-center border-b border-[#7fd07f] bg-[#f1f1f1] pl-[15px] text-black">
        <svg viewBox="0 0 20 20" className="size-5" fill="none" stroke="#111" strokeWidth="1.4" aria-hidden="true">
          <circle cx="12.5" cy="7.5" r="6.5" />
          <path d="M8 12l-7.5 7.5" />
        </svg>
        <input aria-label="搜索" placeholder="搜索" className="ml-[15px] min-w-0 flex-1 text-[19px] leading-7 outline-none placeholder:text-[#222]" />
        <svg viewBox="0 0 40 48" className="mr-7 h-12 w-10" fill="none" aria-hidden="true">
          <path d="M10 1h15l2 12H8zM8 36h19l-2 11H10z" fill="#3553b8" />
          <path d="M35 22h4v4h-4z" fill="#a9b4d8" />
          <circle cx="18" cy="24" r="17" fill="#3553b8" />
          <circle cx="18" cy="24" r="13.5" fill="#eef0fb" />
          <circle cx="18" cy="24" r="11" stroke="#59628f" strokeWidth="1.5" strokeDasharray="1 4.76" />
          <path d="M18 24l-5-9M18 24h8" stroke="#23284a" strokeWidth="1.5" />
          <path d="M18 24l10-5" stroke="#e0483e" />
          <circle cx="18" cy="24" r="2" fill="#e0483e" />
        </svg>
      </label>
      <div className="flex pl-[3px]">
        <TaskButton label="文件资源管理器">
          <svg viewBox="0 0 28 24" className="h-6 w-7" aria-hidden="true">
            <path d="M0 1h11l2 3h14v18H0z" fill="#e5a22b" />
            <path d="M0 6h28v17H0z" fill="#ffd667" />
            <path d="M5 23v-9l3-2h12l3 2v9h-5v-5h-8v5z" fill="#3f8ecb" />
          </svg>
        </TaskButton>
        <TaskButton label="MIDAS">
          <svg viewBox="0 0 30 30" className="size-[30px]" aria-hidden="true">
            <path d="M1 1h28v28H1z" fill="#3c1408" stroke="#e2a02e" strokeWidth="1.5" />
            <path d="M2 15L19 4h6v23h-4z" fill="#f5c32a" stroke="#fff0b0" />
            <path d="M10 15l9-6v10z" fill="#3c1408" />
            <path d="M2 15l18 1" stroke="#fff6d0" strokeWidth="1.5" />
          </svg>
        </TaskButton>
        <TaskButton label="AutoCAD" active>
          <Logo className="size-[30px]" />
        </TaskButton>
        <TaskButton label="录制">
          <svg viewBox="0 0 28 28" className="size-7" aria-hidden="true">
            <circle cx="14" cy="14" r="12.5" fill="#0a0a0a" stroke="#fff" strokeWidth="2" />
            <circle cx="14" cy="14" r="7.5" fill="#f0301e" />
          </svg>
        </TaskButton>
      </div>
      <div className="ml-auto flex items-center">
        <button type="button" aria-label="显示隐藏的图标">
          <svg viewBox="0 0 16 16" className="size-4" fill="none" stroke="#fff" strokeWidth="1.3" aria-hidden="true">
            <path d="M0 12l8-8 8 8" />
          </svg>
        </button>
        <button type="button" aria-label="音量" className="ml-3">
          <svg viewBox="0 0 20 16" className="h-4 w-5" fill="none" stroke="#fff" strokeWidth="1.2" aria-hidden="true">
            <path d="M1 5h3l4-4v14l-4-4H1zM11 6c1 1 1 3 0 4M13.500 4c2 2 2 6 0 8M16 2c4 3 4 9 0 12" />
          </svg>
        </button>
        <span className="ml-2 w-5 text-[19px] leading-6">中</span>
        <div className="ml-3 w-[78px] text-center text-[15px] leading-[23px]">
          <p>14:27</p>
          <p>2024/6/11</p>
        </div>
        <button type="button" aria-label="通知" className="relative ml-[22px] h-[30px] w-[30px]">
          <svg viewBox="0 0 30 30" className="size-[30px]" aria-hidden="true">
            <path d="M0 0h20v17h-6l-5 5v-5H0z" fill="#fff" />
            <path d="M4 5h12M4 9h12M4 13h10" stroke="#222" strokeWidth="1.5" />
            <circle cx="19.5" cy="19.5" r="10" fill="#2b2838" stroke="#8b8799" />
          </svg>
          <span className="absolute right-0 bottom-0 w-5 text-center text-[15px] leading-5 font-semibold">1</span>
        </button>
        <i className="ml-[15px] h-[50px] w-[6px] border-l border-[#7c7096]" />
      </div>
    </footer>
  );
}

export default function App() {
  return (
    <div
      lang="zh-CN"
      className="flex h-screen flex-col overflow-hidden bg-[#f0f0f0] font-['Liberation_Mono','Noto_Sans_CJK_SC',monospace] text-[13px] text-black"
    >
      <header className="flex h-[29px] shrink-0 items-center bg-white pb-[2px] pl-[3px] font-['Open_Sans','Noto_Sans_CJK_SC',sans-serif] text-base">
        <Logo className="size-[18px]" />
        <h1 className="ml-[6px] leading-5">AutoCAD 2007 - [C:\Users\th\Desktop\梁格模型-xiugai.dwg]</h1>
        <div className="ml-auto flex">
          <button type="button" aria-label="最小化" className="flex w-[58px] justify-center">
            <svg viewBox="0 0 12 12" className="size-3" stroke="#000" aria-hidden="true">
              <path d="M0 6.500h12" />
            </svg>
          </button>
          <button type="button" aria-label="还原" className="flex w-[58px] justify-center">
            <svg viewBox="0 0 12 12" className="size-3" fill="none" stroke="#000" aria-hidden="true">
              <path d="M.5 2.500h9v9h-9zM2.500 2.500v-2h9v9h-2" />
            </svg>
          </button>
          <button type="button" aria-label="关闭" className="mr-[3px] flex w-[58px] justify-center">
            <svg viewBox="0 0 12 12" className="size-3" stroke="#000" aria-hidden="true">
              <path d="M0 0l12 12M12 0L0 12" />
            </svg>
          </button>
        </div>
      </header>

      <nav className="flex h-6 shrink-0 items-center border-t border-[#e8e8e8] bg-white pb-[3px] pl-[9px] font-['Open_Sans','Noto_Sans_CJK_SC',sans-serif] text-[15px]">
        <svg viewBox="0 0 20 20" className="size-5" aria-hidden="true">
          <path d="M4 1h10l4 5v12H4z" fill="#3d6189" />
          <path d="M1 9l6-2 12 7v5H1z" fill="#f6c52c" />
          <path d="M4 1v6M1 4h6" stroke="#5d9fd6" />
        </svg>
        {MENUS.map((m) => (
          <button key={m} type="button" className="pr-[11px] pl-2 leading-5 whitespace-nowrap">
            {m}
          </button>
        ))}
        <div className="ml-auto flex gap-1 pr-[2px]">
          <button type="button" aria-label="最小化图形" className="flex size-5 items-center justify-center">
            <svg viewBox="0 0 10 10" className="size-[10px]" stroke="#7b8794" strokeWidth="2" aria-hidden="true">
              <path d="M1 8h8" />
            </svg>
          </button>
          <button type="button" aria-label="还原图形" className="flex size-5 items-center justify-center">
            <svg viewBox="0 0 10 10" className="size-[10px]" fill="none" stroke="#7b8794" strokeWidth="1.5" aria-hidden="true">
              <path d="M1 5h6v4H1zM3 4V1h6v5H7" />
            </svg>
          </button>
          <button type="button" aria-label="关闭图形" className="flex size-5 items-center justify-center">
            <svg viewBox="0 0 10 10" className="size-[10px]" stroke="#7b8794" strokeWidth="2.5" aria-hidden="true">
              <path d="M1 1l8 8M9 1L1 9" />
            </svg>
          </button>
        </div>
      </nav>

      <div className="flex h-[35px] shrink-0">
        <HBar>
          {STANDARD.map((group, i) => (
            <div key={i} className="flex">
              {i > 0 && <Sep />}
              {group.map(([name, label]) => (
                <div key={name} className="flex">
                  <ToolButton name={name} label={label} />
                  {i === 3 && (
                    <button type="button" aria-label={`${label}列表`} className="flex w-[15px] items-center justify-center">
                      <svg viewBox="0 0 8 4" className="h-1 w-2" fill={name === 'undo' ? '#1b2f86' : '#b8b8b8'} aria-hidden="true">
                        <path d="M0 0h8L4 4z" />
                      </svg>
                    </button>
                  )}
                </div>
              ))}
            </div>
          ))}
          <i className="w-[3px]" />
        </HBar>
        <HBar>
          <ToolButton name="textstyle" label="文字样式" className="w-8" />
          <Combo label="文字样式" value="Standard" className="w-[125px]" />
          <ThinSep />
          <ToolButton name="dimstyle" label="标注样式" className="w-[27px]" />
          <Combo label="标注样式" value="Standard" className="w-[125px]" />
          <ThinSep />
          <ToolButton name="tablestyle" label="表格样式" className="w-[27px]" />
          <Combo label="表格样式" value="Standard" className="w-[125px]" />
          <i className="w-[3px]" />
        </HBar>
      </div>

      <div className="flex h-9 shrink-0">
        <HBar>
          <Combo label="工作空间" value="AutoCAD 经典" className="w-[218px] text-sm" pad="pl-[10px]" />
          <ToolButton name="gear" label="工作空间设置" className="w-7" />
          <ToolButton name="home" label="我的工作空间" className="w-[31px]" />
          <i className="w-[3px]" />
        </HBar>
        <HBar>
          <ToolButton name="layers" label="图层特性管理器" className="w-[31px]" />
          <LayerCombo />
          <ToolButton name="layercur" label="将对象的图层置为当前" className="w-[29px]" />
          <ToolButton name="layerprev" label="上一个图层" className="w-[29px]" />
          <i className="w-1" />
        </HBar>
        <HBar>
          <Combo label="颜色控制" value="ByLayer" className="w-[187px]" pad="pl-6">
            <i className="pointer-events-none absolute left-[6px] size-[13px] border border-[#222] bg-[#00d200]" />
          </Combo>
          <ThinSep />
          <Combo label="线型控制" value="ByLayer" className="w-[198px]" pad="pl-[86px]">
            <i className="pointer-events-none absolute left-[6px] h-px w-[75px] bg-black" />
          </Combo>
          <ThinSep />
          <Combo label="线宽控制" value="ByLayer" className="w-[156px]" pad="pl-[54px]">
            <i className="pointer-events-none absolute left-[6px] h-px w-[43px] bg-black" />
          </Combo>
          <ThinSep />
          <Combo label="打印样式控制" value="随颜色" className="w-[150px] text-[15px]" pad="pl-[9px]" disabled />
          <i className="w-[3px]" />
        </HBar>
      </div>

      <main className="flex min-h-0 flex-1">
        <div className="flex w-[67px] shrink-0 items-start gap-px border-r-2 border-[#a0a0a0]">
          <VBar items={DRAW} className="h-[525px]" />
          <VBar items={MODIFY} className="h-[470px]" />
        </div>
        <div className="flex min-w-0 flex-1 flex-col border-t-2 border-[#808080]">
          <div className="min-h-0 flex-1 bg-black">
            <Drawing />
          </div>
          <div className="mb-[2px] flex h-[18px] shrink-0">
            {['M3 2v10M11 2v10L5 7z', 'M10 2v10L4 7z', 'M4 2v10l6-5z', 'M11 2v10M3 2v10l6-5z'].map((d, i) => (
              <button
                key={d}
                type="button"
                aria-label={['第一个布局', '上一个布局', '下一个布局', '最后一个布局'][i]}
                className="flex w-[23px] items-center justify-center border-r border-b border-[#a8a8a8]"
              >
                <svg viewBox="0 0 14 14" className="size-[14px]" fill="#000" stroke="#000" aria-hidden="true">
                  <path d={d} />
                </svg>
              </button>
            ))}
            <div className="ml-[2px] flex">
              <SheetTab label="模型" active width="w-12" />
              <SheetTab label="布局1" width="w-[52px]" />
              <SheetTab label="布局2" width="w-[54px]" />
            </div>
          </div>
        </div>
        <div className="flex w-[35px] shrink-0 items-start border-l border-white pl-[3px]">
          <VBar items={ORDER} className="h-[118px] pb-2" />
        </div>
      </main>

      <CommandPanel />

      <div className="flex h-[29px] shrink-0 items-center border-t border-[#a0a0a0] pt-1 pl-2 font-['Noto_Sans_CJK_SC',sans-serif] text-[15px] leading-5">
        <p>
          <span className="mr-[7px]">0</span>个图层被过滤。请用“图层”对话框修改过滤器。
        </p>
      </div>

      <Taskbar />
    </div>
  );
}
